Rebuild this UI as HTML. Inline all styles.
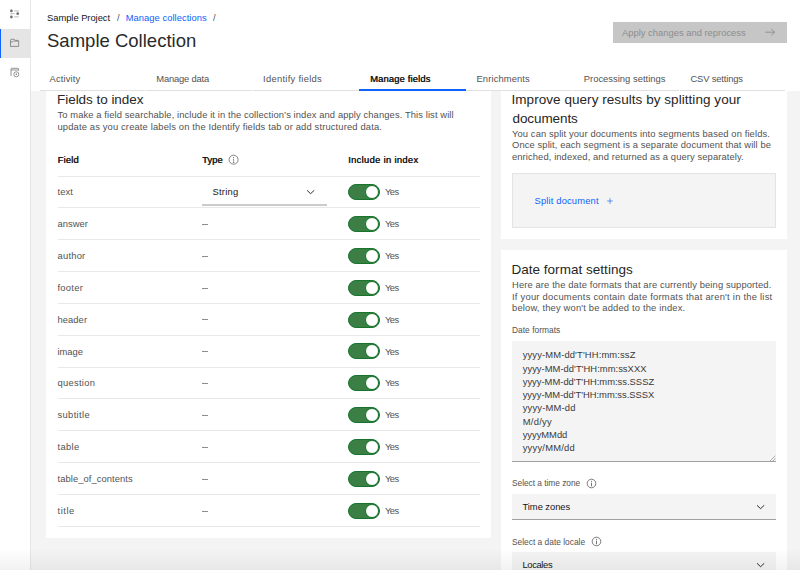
<!DOCTYPE html>
<html><head><meta charset="utf-8"><title>Manage fields</title><style>
html,body{margin:0;padding:0;width:800px;height:570px;overflow:hidden;background:#fff}
body{position:relative;font-family:"Liberation Sans",sans-serif}
.box{position:absolute}
.t{position:absolute;white-space:nowrap}
.tg{width:32px;height:16px;border-radius:8px;background:#3b7f45;border:1px solid #17742c;box-sizing:border-box}
.knob{position:absolute;left:15.75px;top:0px;width:14px;height:14px;border-radius:50%;background:#fff;border:1px solid #17742c;box-sizing:border-box}
</style></head><body>
<div class="box" style="left:0;top:0;width:30px;height:570px;background:#fff;border-right:1px solid #e6e6e6;box-shadow:-1px 0 1px rgba(0,0,0,0.03)"></div>
<div class="box" style="left:0;top:29px;width:30px;height:29px;background:#e5e5e5"></div>
<div class="box" style="left:0;top:29px;width:1.2px;height:29px;background:#0f62fe"></div>
<svg class="box" style="left:0;top:0" width="30" height="30" viewBox="0 0 30 30">
<g fill="#6f6f6f"><circle cx="11.4" cy="10.9" r="1.35"/><circle cx="17.7" cy="13.7" r="1.35"/><circle cx="11.4" cy="16.9" r="1.35"/></g>
<g stroke="#a8a8a8" stroke-width="0.8"><line x1="14.2" y1="10.9" x2="18.7" y2="10.9"/><line x1="10.2" y1="13.7" x2="14.8" y2="13.7"/><line x1="14.2" y1="16.9" x2="18.7" y2="16.9"/>
<line x1="11.4" y1="9" x2="11.4" y2="9.6"/><line x1="11.4" y1="18.2" x2="11.4" y2="18.8"/><line x1="17.7" y1="12.4" x2="17.7" y2="11.8"/></g>
</svg>
<svg class="box" style="left:0;top:29px" width="30" height="30" viewBox="0 0 30 30">
<path d="M10.5 17.4 V11.2 Q10.5 10.3 11.4 10.3 H14.2 L15.3 11.4 H17.7 Q18.6 11.4 18.6 12.3 V17.4 Z M10.5 12.9 H12.4 L13.4 12.1 H18.6" fill="none" stroke="#777" stroke-width="0.8"/>
</svg>
<svg class="box" style="left:0;top:58px" width="30" height="30" viewBox="0 0 30 30">
<path d="M11 18 V11 Q11 10.3 11.7 10.3 H17.9 Q18.6 10.3 18.6 11 V12.6" fill="none" stroke="#777" stroke-width="0.8"/>
<line x1="11" y1="12" x2="18.6" y2="12" stroke="#777" stroke-width="0.8"/>
<circle cx="16.3" cy="16.3" r="2.5" fill="none" stroke="#777" stroke-width="0.8"/>
<circle cx="16.3" cy="16.3" r="0.75" fill="#777"/>
</svg>
<div class="t" style="left:47.00px;top:13.24px;font-size:9.4px;line-height:9.4px;color:#161616;letter-spacing:-0.036px;">Sample Project</div>
<div class="t" style="left:117.00px;top:13.24px;font-size:9.4px;line-height:9.4px;color:#525252;">/</div>
<div class="t" style="left:125.75px;top:13.24px;font-size:9.4px;line-height:9.4px;color:#0f62fe;letter-spacing:0.040px;">Manage collections</div>
<div class="t" style="left:213.00px;top:13.24px;font-size:9.4px;line-height:9.4px;color:#525252;">/</div>
<div class="t" style="left:47.00px;top:31.74px;font-size:18.5px;line-height:18.5px;color:#2a2a2a;letter-spacing:0.012px;">Sample Collection</div>
<div class="box" style="left:613px;top:22px;width:174px;height:20.5px;background:#c6c6c6"></div>
<div class="t" style="left:622.00px;top:27.64px;font-size:9.4px;line-height:9.4px;color:#8d8d8d;letter-spacing:0.007px;">Apply changes and reprocess</div>
<svg class="box" style="left:760px;top:25px" width="20" height="15" viewBox="0 0 20 15">
<path d="M5.3 7.2 H14.5 M11.2 4 L14.6 7.2 L11.2 10.4" fill="none" stroke="#8d8d8d" stroke-width="0.9"/></svg>
<div class="box" style="left:39.50px;top:90px;width:105.71px;height:1px;background:#e0e0e0"></div>
<div class="t" style="left:49.50px;top:74.44px;font-size:9.4px;line-height:9.4px;color:#525252;letter-spacing:0.142px;">Activity</div>
<div class="box" style="left:146.21px;top:90px;width:105.71px;height:1px;background:#e0e0e0"></div>
<div class="t" style="left:156.25px;top:74.44px;font-size:9.4px;line-height:9.4px;color:#525252;letter-spacing:-0.177px;">Manage data</div>
<div class="box" style="left:252.93px;top:90px;width:105.71px;height:1px;background:#e0e0e0"></div>
<div class="t" style="left:263.00px;top:74.44px;font-size:9.4px;line-height:9.4px;color:#525252;letter-spacing:0.284px;">Identify fields</div>
<div class="box" style="left:359.64px;top:90px;width:105.71px;height:1px;background:#e0e0e0"></div>
<div class="box" style="left:359.14px;top:89.3px;width:106.71px;height:1.7px;background:#0f62fe"></div>
<div class="t" style="left:370.00px;top:74.44px;font-size:9.4px;line-height:9.4px;color:#161616;text-shadow:0.4px 0 0 #161616;letter-spacing:0.152px;">Manage fields</div>
<div class="box" style="left:466.36px;top:90px;width:105.71px;height:1px;background:#e0e0e0"></div>
<div class="t" style="left:476.50px;top:74.44px;font-size:9.4px;line-height:9.4px;color:#525252;letter-spacing:0.118px;">Enrichments</div>
<div class="box" style="left:573.07px;top:90px;width:105.71px;height:1px;background:#e0e0e0"></div>
<div class="t" style="left:583.75px;top:74.44px;font-size:9.4px;line-height:9.4px;color:#525252;letter-spacing:0.022px;">Processing settings</div>
<div class="box" style="left:679.79px;top:90px;width:105.71px;height:1px;background:#e0e0e0"></div>
<div class="t" style="left:690.50px;top:74.44px;font-size:9.4px;line-height:9.4px;color:#525252;letter-spacing:-0.155px;">CSV settings</div>
<div class="box" style="left:31px;top:91px;width:769px;height:479px;background:#f4f4f4"></div>
<div class="box" style="left:46px;top:91px;width:444.6px;height:446.5px;background:#fff"></div>
<div class="t" style="left:57.00px;top:92.77px;font-size:13.5px;line-height:13.5px;color:#262626;letter-spacing:-0.039px;">Fields to index</div>
<div class="t" style="left:57.50px;top:109.74px;font-size:9.4px;line-height:9.4px;color:#525252;letter-spacing:0.101px;">To make a field searchable, include it in the collection’s index and apply changes. This list will</div>
<div class="t" style="left:57.50px;top:122.24px;font-size:9.4px;line-height:9.4px;color:#525252;letter-spacing:0.145px;">update as you create labels on the Identify fields tab or add structured data.</div>
<div class="t" style="left:57.50px;top:155.24px;font-size:9.4px;line-height:9.4px;color:#161616;text-shadow:0.4px 0 0 #161616;letter-spacing:0.161px;">Field</div>
<div class="t" style="left:202.00px;top:155.24px;font-size:9.4px;line-height:9.4px;color:#161616;text-shadow:0.4px 0 0 #161616;letter-spacing:0.063px;">Type</div>
<svg class="box" style="left:228px;top:154px" width="11" height="11" viewBox="0 0 11 11">
<circle cx="5.6" cy="5.7" r="4.5" fill="none" stroke="#525252" stroke-width="0.7"/>
<path d="M5.6 5 V8.5 M4.9 8.5 H6.3 M4.9 5 H5.6" fill="none" stroke="#525252" stroke-width="0.6"/><circle cx="5.6" cy="3.4" r="0.5" fill="#525252"/></svg>
<div class="t" style="left:348.00px;top:154.84px;font-size:9.4px;line-height:9.4px;color:#161616;text-shadow:0.4px 0 0 #161616;letter-spacing:0.319px;">Include in index</div>
<div class="box" style="left:57.5px;top:175.5px;width:422px;height:1px;background:#e8e8e8"></div>
<div class="box" style="left:57.5px;top:207.34px;width:422px;height:1px;background:#e8e8e8"></div>
<div class="t" style="left:57.50px;top:187.34px;font-size:9.4px;line-height:9.4px;color:#525252;letter-spacing:0.098px;">text</div>
<div class="t" style="left:212.50px;top:187.44px;font-size:9.4px;line-height:9.4px;color:#161616;letter-spacing:0.225px;">String</div>
<svg class="box" style="left:300px;top:185px" width="20" height="14" viewBox="0 0 20 14"><path d="M7 5.3 L10.6 8.7 L14.2 5.3" fill="none" stroke="#161616" stroke-width="0.9"/></svg>
<div class="box" style="left:202px;top:204.1px;width:124.7px;height:1.6px;background:#cbcbcb"></div>
<div class="box tg" style="left:348px;top:184.20px"><div class="knob"></div></div>
<div class="t" style="left:385.00px;top:187.34px;font-size:9.4px;line-height:9.4px;color:#525252;letter-spacing:-0.553px;">Yes</div>
<div class="box" style="left:57.5px;top:239.18px;width:422px;height:1px;background:#e8e8e8"></div>
<div class="t" style="left:57.50px;top:219.18px;font-size:9.4px;line-height:9.4px;color:#525252;letter-spacing:0.020px;">answer</div>
<div class="box" style="left:202px;top:223.94px;width:6px;height:0.8px;background:#8d8d8d"></div>
<div class="box tg" style="left:348px;top:216.04px"><div class="knob"></div></div>
<div class="t" style="left:385.00px;top:219.18px;font-size:9.4px;line-height:9.4px;color:#525252;letter-spacing:-0.553px;">Yes</div>
<div class="box" style="left:57.5px;top:271.02px;width:422px;height:1px;background:#e8e8e8"></div>
<div class="t" style="left:57.50px;top:251.02px;font-size:9.4px;line-height:9.4px;color:#525252;letter-spacing:0.228px;">author</div>
<div class="box" style="left:202px;top:255.78px;width:6px;height:0.8px;background:#8d8d8d"></div>
<div class="box tg" style="left:348px;top:247.88px"><div class="knob"></div></div>
<div class="t" style="left:385.00px;top:251.02px;font-size:9.4px;line-height:9.4px;color:#525252;letter-spacing:-0.553px;">Yes</div>
<div class="box" style="left:57.5px;top:302.86px;width:422px;height:1px;background:#e8e8e8"></div>
<div class="t" style="left:57.50px;top:282.87px;font-size:9.4px;line-height:9.4px;color:#525252;letter-spacing:0.270px;">footer</div>
<div class="box" style="left:202px;top:287.62px;width:6px;height:0.8px;background:#8d8d8d"></div>
<div class="box tg" style="left:348px;top:279.72px"><div class="knob"></div></div>
<div class="t" style="left:385.00px;top:282.87px;font-size:9.4px;line-height:9.4px;color:#525252;letter-spacing:-0.553px;">Yes</div>
<div class="box" style="left:57.5px;top:334.70px;width:422px;height:1px;background:#e8e8e8"></div>
<div class="t" style="left:57.50px;top:314.71px;font-size:9.4px;line-height:9.4px;color:#525252;letter-spacing:0.066px;">header</div>
<div class="box" style="left:202px;top:319.46px;width:6px;height:0.8px;background:#8d8d8d"></div>
<div class="box tg" style="left:348px;top:311.56px"><div class="knob"></div></div>
<div class="t" style="left:385.00px;top:314.71px;font-size:9.4px;line-height:9.4px;color:#525252;letter-spacing:-0.553px;">Yes</div>
<div class="box" style="left:57.5px;top:366.55px;width:422px;height:1px;background:#e8e8e8"></div>
<div class="t" style="left:57.50px;top:346.55px;font-size:9.4px;line-height:9.4px;color:#525252;letter-spacing:-0.030px;">image</div>
<div class="box" style="left:202px;top:351.30px;width:6px;height:0.8px;background:#8d8d8d"></div>
<div class="box tg" style="left:348px;top:343.40px"><div class="knob"></div></div>
<div class="t" style="left:385.00px;top:346.55px;font-size:9.4px;line-height:9.4px;color:#525252;letter-spacing:-0.553px;">Yes</div>
<div class="box" style="left:57.5px;top:398.39px;width:422px;height:1px;background:#e8e8e8"></div>
<div class="t" style="left:57.50px;top:378.39px;font-size:9.4px;line-height:9.4px;color:#525252;letter-spacing:0.281px;">question</div>
<div class="box" style="left:202px;top:383.15px;width:6px;height:0.8px;background:#8d8d8d"></div>
<div class="box tg" style="left:348px;top:375.25px"><div class="knob"></div></div>
<div class="t" style="left:385.00px;top:378.39px;font-size:9.4px;line-height:9.4px;color:#525252;letter-spacing:-0.553px;">Yes</div>
<div class="box" style="left:57.5px;top:430.23px;width:422px;height:1px;background:#e8e8e8"></div>
<div class="t" style="left:57.50px;top:410.23px;font-size:9.4px;line-height:9.4px;color:#525252;letter-spacing:0.344px;">subtitle</div>
<div class="box" style="left:202px;top:414.99px;width:6px;height:0.8px;background:#8d8d8d"></div>
<div class="box tg" style="left:348px;top:407.09px"><div class="knob"></div></div>
<div class="t" style="left:385.00px;top:410.23px;font-size:9.4px;line-height:9.4px;color:#525252;letter-spacing:-0.553px;">Yes</div>
<div class="box" style="left:57.5px;top:462.07px;width:422px;height:1px;background:#e8e8e8"></div>
<div class="t" style="left:57.50px;top:442.07px;font-size:9.4px;line-height:9.4px;color:#525252;letter-spacing:0.321px;">table</div>
<div class="box" style="left:202px;top:446.83px;width:6px;height:0.8px;background:#8d8d8d"></div>
<div class="box tg" style="left:348px;top:438.93px"><div class="knob"></div></div>
<div class="t" style="left:385.00px;top:442.07px;font-size:9.4px;line-height:9.4px;color:#525252;letter-spacing:-0.553px;">Yes</div>
<div class="box" style="left:57.5px;top:493.91px;width:422px;height:1px;background:#e8e8e8"></div>
<div class="t" style="left:57.50px;top:473.91px;font-size:9.4px;line-height:9.4px;color:#525252;letter-spacing:0.067px;">table_of_contents</div>
<div class="box" style="left:202px;top:478.67px;width:6px;height:0.8px;background:#8d8d8d"></div>
<div class="box tg" style="left:348px;top:470.77px"><div class="knob"></div></div>
<div class="t" style="left:385.00px;top:473.91px;font-size:9.4px;line-height:9.4px;color:#525252;letter-spacing:-0.553px;">Yes</div>
<div class="box" style="left:57.5px;top:525.75px;width:422px;height:1px;background:#e8e8e8"></div>
<div class="t" style="left:57.50px;top:505.75px;font-size:9.4px;line-height:9.4px;color:#525252;letter-spacing:0.531px;">title</div>
<div class="box" style="left:202px;top:510.51px;width:6px;height:0.8px;background:#8d8d8d"></div>
<div class="box tg" style="left:348px;top:502.61px"><div class="knob"></div></div>
<div class="t" style="left:385.00px;top:505.75px;font-size:9.4px;line-height:9.4px;color:#525252;letter-spacing:-0.553px;">Yes</div>
<div class="box" style="left:501px;top:91px;width:285.6px;height:147.5px;background:#fff"></div>
<div class="t" style="left:511.50px;top:92.52px;font-size:13.5px;line-height:13.5px;color:#262626;letter-spacing:0.050px;">Improve query results by splitting your</div>
<div class="t" style="left:512.50px;top:111.57px;font-size:13.5px;line-height:13.5px;color:#262626;letter-spacing:-0.086px;">documents</div>
<div class="t" style="left:512.00px;top:128.74px;font-size:9.4px;line-height:9.4px;color:#525252;letter-spacing:0.112px;">You can split your documents into segments based on fields.</div>
<div class="t" style="left:512.00px;top:140.34px;font-size:9.4px;line-height:9.4px;color:#525252;letter-spacing:0.105px;">Once split, each segment is a separate document that will be</div>
<div class="t" style="left:512.00px;top:152.14px;font-size:9.4px;line-height:9.4px;color:#525252;letter-spacing:0.096px;">enriched, indexed, and returned as a query separately.</div>
<div class="box" style="left:512px;top:173px;width:263.5px;height:54.7px;background:#f4f4f4;border:1px solid #e3e3e3;box-sizing:border-box"></div>
<div class="t" style="left:534.50px;top:196.44px;font-size:9.4px;line-height:9.4px;color:#0f62fe;letter-spacing:0.153px;">Split document</div>
<svg class="box" style="left:604.25px;top:194.55px" width="12" height="12" viewBox="0 0 12 12"><path d="M6 3.2 V8.8 M3.2 6 H8.8" fill="none" stroke="#0f62fe" stroke-width="0.65"/></svg>
<div class="box" style="left:501px;top:249.5px;width:285.6px;height:330px;background:#fff"></div>
<div class="t" style="left:511.40px;top:262.67px;font-size:13.5px;line-height:13.5px;color:#262626;letter-spacing:0.029px;">Date format settings</div>
<div class="t" style="left:512.00px;top:279.74px;font-size:9.4px;line-height:9.4px;color:#525252;letter-spacing:0.118px;">Here are the date formats that are currently being supported.</div>
<div class="t" style="left:512.00px;top:291.54px;font-size:9.4px;line-height:9.4px;color:#525252;letter-spacing:0.238px;">If your documents contain date formats that aren't in the list</div>
<div class="t" style="left:512.00px;top:303.44px;font-size:9.4px;line-height:9.4px;color:#525252;letter-spacing:0.170px;">below, they won't be added to the index.</div>
<div class="t" style="left:512.00px;top:325.59px;font-size:8.4px;line-height:8.4px;color:#525252;letter-spacing:0.023px;">Date formats</div>
<div class="box" style="left:512px;top:341px;width:263.6px;height:120.5px;background:#f4f4f4;border-bottom:1px solid #a0a0a0;box-sizing:border-box"></div>
<div class="t" style="left:522.70px;top:350.34px;font-size:9.4px;line-height:9.4px;color:#393939;letter-spacing:0.139px;">yyyy-MM-dd'T'HH:mm:ssZ</div>
<div class="t" style="left:522.70px;top:363.58px;font-size:9.4px;line-height:9.4px;color:#393939;letter-spacing:0.039px;">yyyy-MM-dd'T'HH:mm:ssXXX</div>
<div class="t" style="left:522.70px;top:376.82px;font-size:9.4px;line-height:9.4px;color:#393939;letter-spacing:0.010px;">yyyy-MM-dd'T'HH:mm:ss.SSSZ</div>
<div class="t" style="left:522.70px;top:390.06px;font-size:9.4px;line-height:9.4px;color:#393939;letter-spacing:-0.006px;">yyyy-MM-dd'T'HH:mm:ss.SSSX</div>
<div class="t" style="left:522.70px;top:403.30px;font-size:9.4px;line-height:9.4px;color:#393939;letter-spacing:0.186px;">yyyy-MM-dd</div>
<div class="t" style="left:522.70px;top:416.54px;font-size:9.4px;line-height:9.4px;color:#393939;letter-spacing:0.296px;">M/d/yy</div>
<div class="t" style="left:522.70px;top:429.78px;font-size:9.4px;line-height:9.4px;color:#393939;letter-spacing:-0.026px;">yyyyMMdd</div>
<div class="t" style="left:522.70px;top:443.02px;font-size:9.4px;line-height:9.4px;color:#393939;letter-spacing:0.223px;">yyyy/MM/dd</div>
<svg class="box" style="left:765px;top:451px" width="12" height="12" viewBox="0 0 12 12"><path d="M5 10 L10.3 4.8 M7.9 10 L10.5 7.4" stroke="#8d8d8d" stroke-width="0.7"/></svg>
<div class="t" style="left:512.00px;top:479.49px;font-size:8.4px;line-height:8.4px;color:#525252;letter-spacing:-0.038px;">Select a time zone</div>
<svg class="box" style="left:585.5px;top:477.5px" width="11" height="11" viewBox="0 0 11 11"><circle cx="5.5" cy="5.5" r="4.3" fill="none" stroke="#525252" stroke-width="0.75"/><rect x="5.1" y="4.7" width="0.8" height="3.6" fill="#525252"/><circle cx="5.5" cy="3.3" r="0.55" fill="#525252"/></svg>
<div class="box" style="left:512px;top:494px;width:263.6px;height:25.5px;background:#f4f4f4;border-bottom:1px solid #a0a0a0;box-sizing:border-box"></div>
<div class="t" style="left:522.50px;top:502.24px;font-size:9.4px;line-height:9.4px;color:#161616;letter-spacing:-0.046px;">Time zones</div>
<svg class="box" style="left:750.7px;top:500px" width="20" height="14" viewBox="0 0 20 14"><path d="M6 5.3 L9.6 8.7 L13.2 5.3" fill="none" stroke="#161616" stroke-width="0.9"/></svg>
<div class="t" style="left:512.00px;top:537.59px;font-size:8.4px;line-height:8.4px;color:#525252;">Select a date locale</div>
<svg class="box" style="left:591px;top:536px" width="11" height="11" viewBox="0 0 11 11"><circle cx="5.5" cy="5.5" r="4.3" fill="none" stroke="#525252" stroke-width="0.75"/><rect x="5.1" y="4.7" width="0.8" height="3.6" fill="#525252"/><circle cx="5.5" cy="3.3" r="0.55" fill="#525252"/></svg>
<div class="box" style="left:512px;top:552px;width:263.6px;height:30px;background:#f4f4f4;border-bottom:1px solid #a0a0a0;box-sizing:border-box"></div>
<div class="t" style="left:522.50px;top:560.24px;font-size:9.4px;line-height:9.4px;color:#161616;letter-spacing:-0.371px;">Locales</div>
<svg class="box" style="left:750.7px;top:558px" width="20" height="14" viewBox="0 0 20 14"><path d="M6 5.3 L9.6 8.7 L13.2 5.3" fill="none" stroke="#161616" stroke-width="0.9"/></svg>
<div class="box" style="left:0;top:548px;width:800px;height:22px;background:linear-gradient(rgba(0,0,0,0),rgba(0,0,0,0.05))"></div>
</body></html>
